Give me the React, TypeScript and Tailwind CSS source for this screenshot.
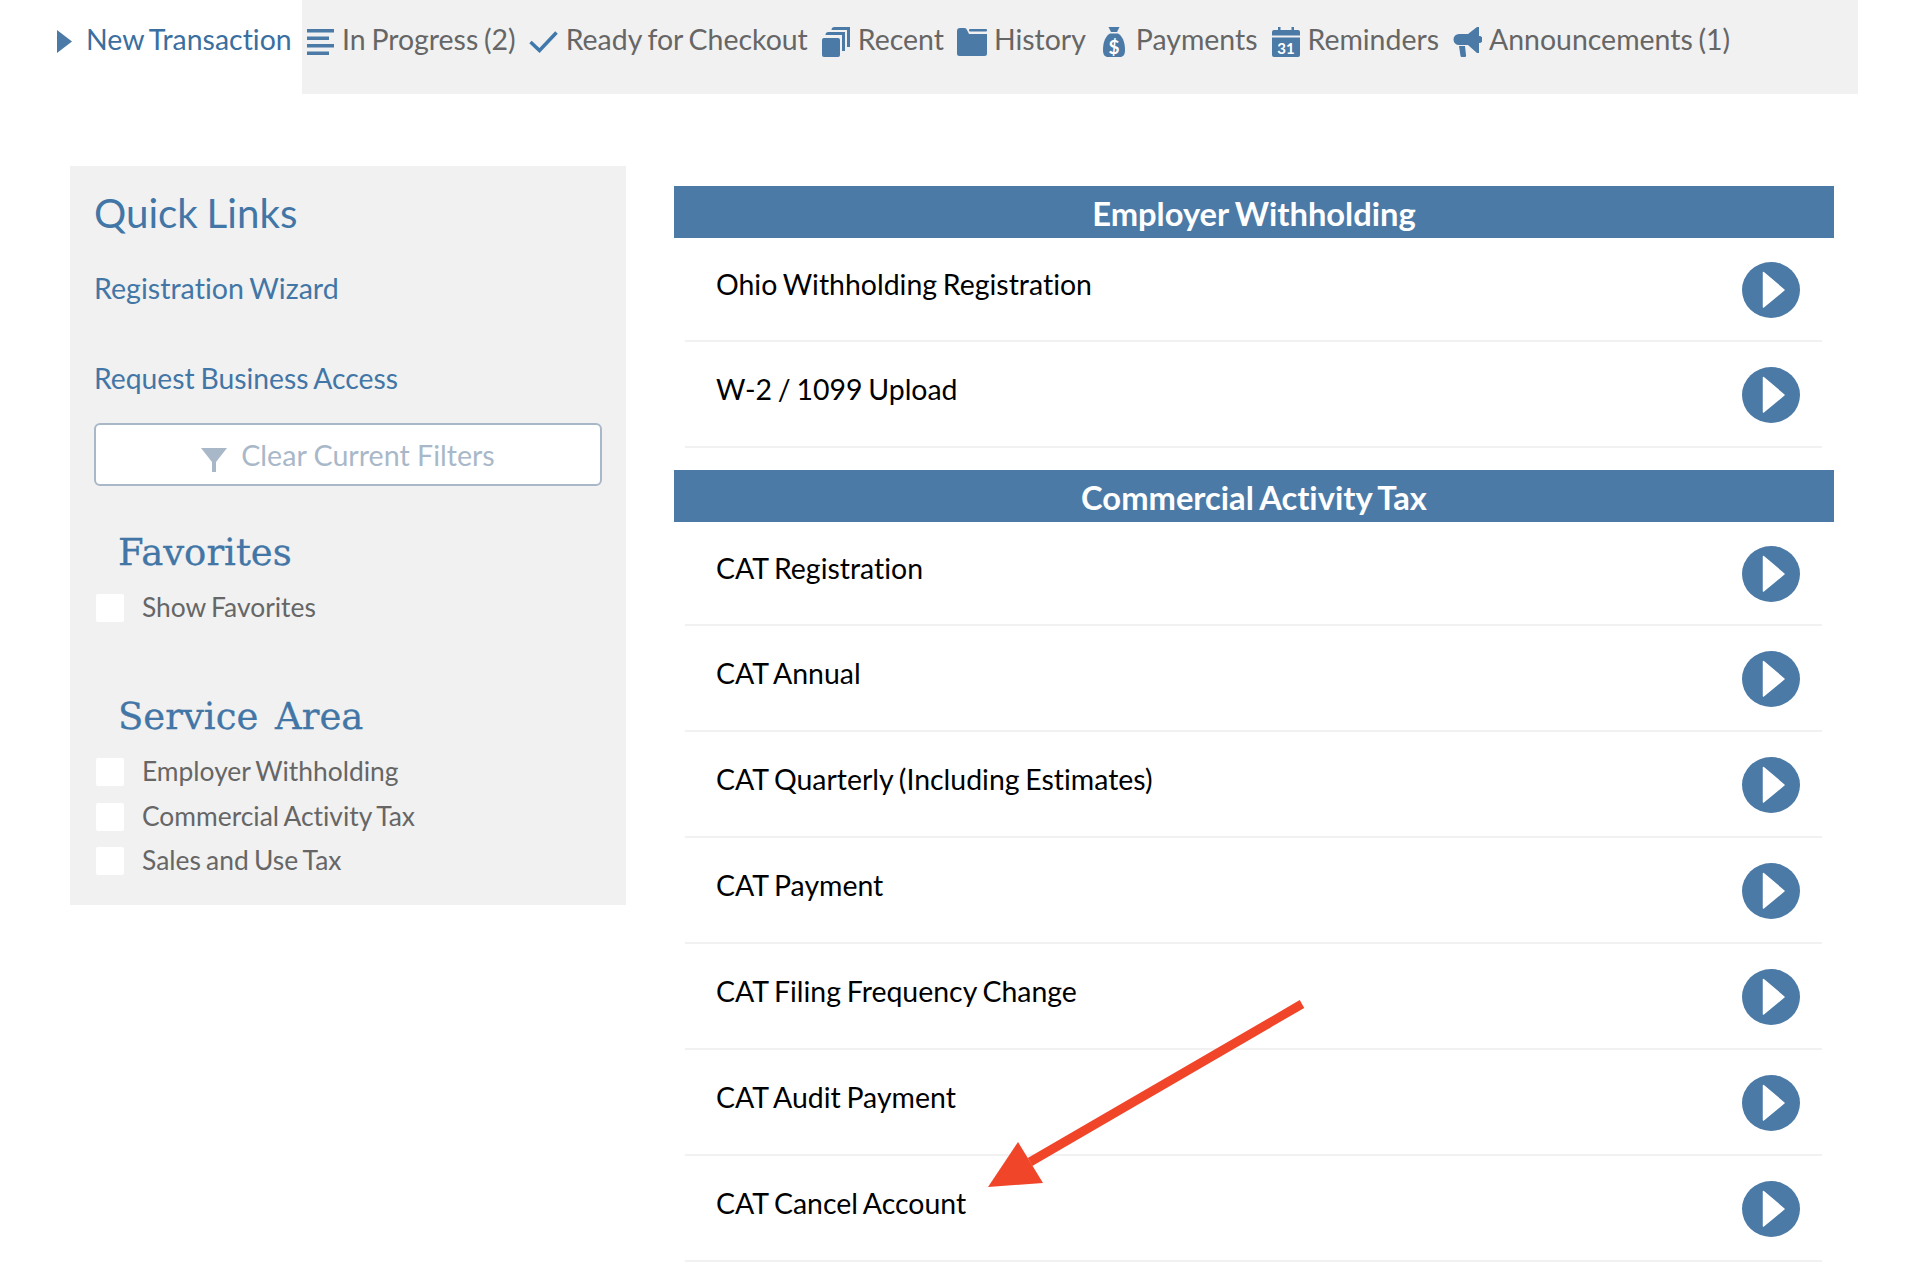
const BLUE = '#4b7aa7'

function PlayCircle() {
  return (
    <svg width="58" height="56" viewBox="0 0 58 56" className="shrink-0 mt-[2px]">
      <ellipse cx="29" cy="28" rx="29" ry="28" fill={BLUE} />
      <path d="M21.5 10.5 L42 28 L21.5 45 Z" fill="#fff" stroke="#fff" strokeWidth="1.5" strokeLinejoin="round" />
    </svg>
  )
}

function ListIcon() {
  return (
    <svg width="27" height="28" viewBox="0 0 27 28" fill={BLUE}>
      <rect x="0" y="1" width="27" height="3.5" />
      <rect x="0" y="8.5" width="22" height="3.5" />
      <rect x="0" y="16" width="27" height="3.5" />
      <rect x="0" y="23.5" width="22" height="3.5" />
    </svg>
  )
}

function CheckIcon() {
  return (
    <svg width="29" height="22" viewBox="0 0 29 22" fill="none" stroke="#3f78aa" strokeWidth="3.5">
      <path d="M1.5 11 L10.5 19.5 L27.5 1.5" />
    </svg>
  )
}

function CopiesIcon() {
  return (
    <svg width="28" height="30" viewBox="0 0 28 30">
      <rect x="0" y="11" width="18" height="19" rx="2" fill={BLUE} />
      <path d="M5 8 a1.5 1.5 0 0 1 1.5-1.5 H21.5 V24" fill="none" stroke={BLUE} strokeWidth="3" />
      <path d="M11 3 a1.5 1.5 0 0 1 1.5-1.5 H26.5 V20" fill="none" stroke={BLUE} strokeWidth="3" />
    </svg>
  )
}

function FolderIcon() {
  return (
    <svg width="30" height="28" viewBox="0 0 30 28" fill={BLUE}>
      <path d="M0 3 a3 3 0 0 1 3-3 h4 a3 3 0 0 1 3 2 l2 4 h18 v19.5 a2.5 2.5 0 0 1-2.5 2.5 h-25 a2.5 2.5 0 0 1-2.5-2.5 z" />
      <rect x="12" y="1" width="18" height="2.5" rx="1" />
    </svg>
  )
}

function BagIcon() {
  return (
    <svg width="22" height="30" viewBox="0 0 22 30">
      <path d="M5.5 0 H16.5 L14 5 H8 Z" fill={BLUE} />
      <path d="M7 6.5 H15 C19 9 22 14 22 23 C22 28 20 30 17 30 H5 C2 30 0 28 0 23 C0 14 3 9 7 6.5 Z" fill={BLUE} />
      <text x="11" y="26.5" textAnchor="middle" fontSize="19" fontWeight="700" fill="#fff" fontFamily="Lato, sans-serif">$</text>
    </svg>
  )
}

function CalendarIcon() {
  return (
    <svg width="28" height="30" viewBox="0 0 28 30" fill={BLUE}>
      <rect x="6" y="0" width="2.5" height="4" />
      <rect x="19.5" y="0" width="2.5" height="4" />
      <path d="M0 5 a2 2 0 0 1 2-2 h24 a2 2 0 0 1 2 2 v3.5 h-28 z" />
      <path d="M0 10.5 h28 v17.5 a2 2 0 0 1-2 2 h-24 a2 2 0 0 1-2-2 z" />
      <text x="14" y="27" textAnchor="middle" fontSize="15" fontWeight="700" fill="#fff" fontFamily="Lato, sans-serif">31</text>
    </svg>
  )
}

function HornIcon() {
  return (
    <svg width="29" height="30" viewBox="0 0 29 30" fill={BLUE}>
      <path d="M6 7 H15 L24 0 H26 V9 a3.5 3.5 0 0 1 0 7 V26 H24 L15 18 H6 a5.5 5.5 0 0 1 0-11 Z" />
      <path d="M6 19 H12 L13 28 a1.5 1.5 0 0 1-1.5 2 H9 a1.5 1.5 0 0 1-1.5-1 Z" />
    </svg>
  )
}

const NAV_ITEMS = [
  { label: 'In Progress (2)', icon: <ListIcon /> },
  { label: 'Ready for Checkout', icon: <CheckIcon /> },
  { label: 'Recent', icon: <CopiesIcon /> },
  { label: 'History', icon: <FolderIcon /> },
  { label: 'Payments', icon: <BagIcon /> },
  { label: 'Reminders', icon: <CalendarIcon /> },
  { label: 'Announcements (1)', icon: <HornIcon /> },
]

const SECTIONS = [
  { title: 'Employer Withholding', rows: ['Ohio Withholding Registration', 'W-2 / 1099 Upload'] },
  {
    title: 'Commercial Activity Tax',
    rows: [
      'CAT Registration',
      'CAT Annual',
      'CAT Quarterly (Including Estimates)',
      'CAT Payment',
      'CAT Filing Frequency Change',
      'CAT Audit Payment',
      'CAT Cancel Account',
    ],
  },
]

function Check({ label }: { label: string }) {
  return (
    <label className="flex items-center gap-[18px] h-[28px] text-[26.4px] text-[#666]">
      <span className="w-7 h-7 bg-white rounded-[2px] shrink-0" />
      {label}
    </label>
  )
}

export default function App() {
  return (
    <div className="relative w-[1924px] h-[1284px] overflow-hidden bg-white font-['Lato',sans-serif] [font-variant-ligatures:none] [word-spacing:-1.5px]">
      {/* top nav */}
      <nav className="flex h-[94px] text-[28.45px] leading-none">
        <div className="w-[302px] shrink-0 flex items-start pt-[25px] pl-[57px] gap-[14px] text-[#3a6f9f]">
          <svg width="15" height="23" viewBox="0 0 15 23" className="mt-[5px]" fill={BLUE}>
            <path d="M0 0 L15 11.5 L0 23 Z" />
          </svg>
          New Transaction
        </div>
        <div className="w-[1556px] bg-[#f1f1f1] flex items-start gap-[12px] pl-[2px] pt-[25px] text-[#666]">
          {NAV_ITEMS.map(item => (
            <div key={item.label} className="flex items-center gap-[6px] h-[30px]">
              <span className="w-[32px] mt-[4px] flex justify-center shrink-0">{item.icon}</span>
              <span className="-mt-[2px]">{item.label}</span>
            </div>
          ))}
        </div>
      </nav>

      <div className="flex pl-[70px]">
        {/* sidebar */}
        <aside className="w-[556px] h-[739px] mt-[72px] bg-[#f1f1f1] px-6 shrink-0">
          <h2 className="mt-[22px] text-[40.3px] leading-[50px] text-[#4276a6]">Quick Links</h2>
          <a className="block mt-[33px] text-[28.6px] leading-[34px] text-[#4276a6]">Registration Wizard</a>
          <a className="block mt-[56px] text-[28.3px] leading-[34px] text-[#4276a6]">Request Business Access</a>
          <button className="mt-[28px] w-[508px] h-[63px] pt-[2px] bg-white border-2 border-[#a9b8c8] rounded-md flex items-center justify-center gap-[14px] text-[28.6px] text-[#a9b8c8]">
            <svg width="26" height="24" viewBox="0 0 26 24" fill="#a9b8c8" className="mt-[8px]">
              <path d="M0 0 H26 L15 14 V24 H11 V14 Z" />
            </svg>
            Clear Current Filters
          </button>

          <h3 className="mt-[45px] ml-6 font-['DejaVu_Serif',serif] text-[37px] leading-[44px] text-[#4276a6] [-webkit-text-stroke:0.3px_#4276a6]">Favorites</h3>
          <div className="mt-[19px] ml-[2px]">
            <Check label="Show Favorites" />
          </div>

          <h3 className="mt-[73px] ml-6 font-['DejaVu_Serif',serif] text-[37px] leading-[44px] text-[#4276a6] [word-spacing:5px] [-webkit-text-stroke:0.3px_#4276a6]">Service Area</h3>
          <div className="mt-[19px] ml-[2px] flex flex-col gap-[16.5px]">
            <Check label="Employer Withholding" />
            <Check label="Commercial Activity Tax" />
            <Check label="Sales and Use Tax" />
          </div>
        </aside>

        {/* transaction list */}
        <main className="ml-[48px] mt-[92px] w-[1160px] flex flex-col gap-[22px]">
          {SECTIONS.map(section => (
            <section key={section.title}>
              <h2 className="h-[52px] bg-[#4b7aa7] text-white text-center font-bold text-[32.7px] leading-[56px]">{section.title}</h2>
              <div className="ml-[11px] mr-[12px]">
                {section.rows.map(row => (
                  <div key={row} className="h-[106px] first:h-[104px] pl-[31px] pr-[22px] flex items-center justify-between border-b-2 border-[#f1f1f1] text-[28.45px] text-black">
                    <span className="-mt-[10px]">{row}</span>
                    <PlayCircle />
                  </div>
                ))}
              </div>
            </section>
          ))}
        </main>
      </div>

      {/* annotation arrow */}
      <svg className="absolute left-0 top-0 pointer-events-none" width="1924" height="1284">
        <path d="M1302 1004 L1030 1162" stroke="#f1452a" strokeWidth="9" fill="none" />
        <path d="M1018 1142 L1043 1183 L988 1187 Z" fill="#f1452a" />
      </svg>
    </div>
  )
}
